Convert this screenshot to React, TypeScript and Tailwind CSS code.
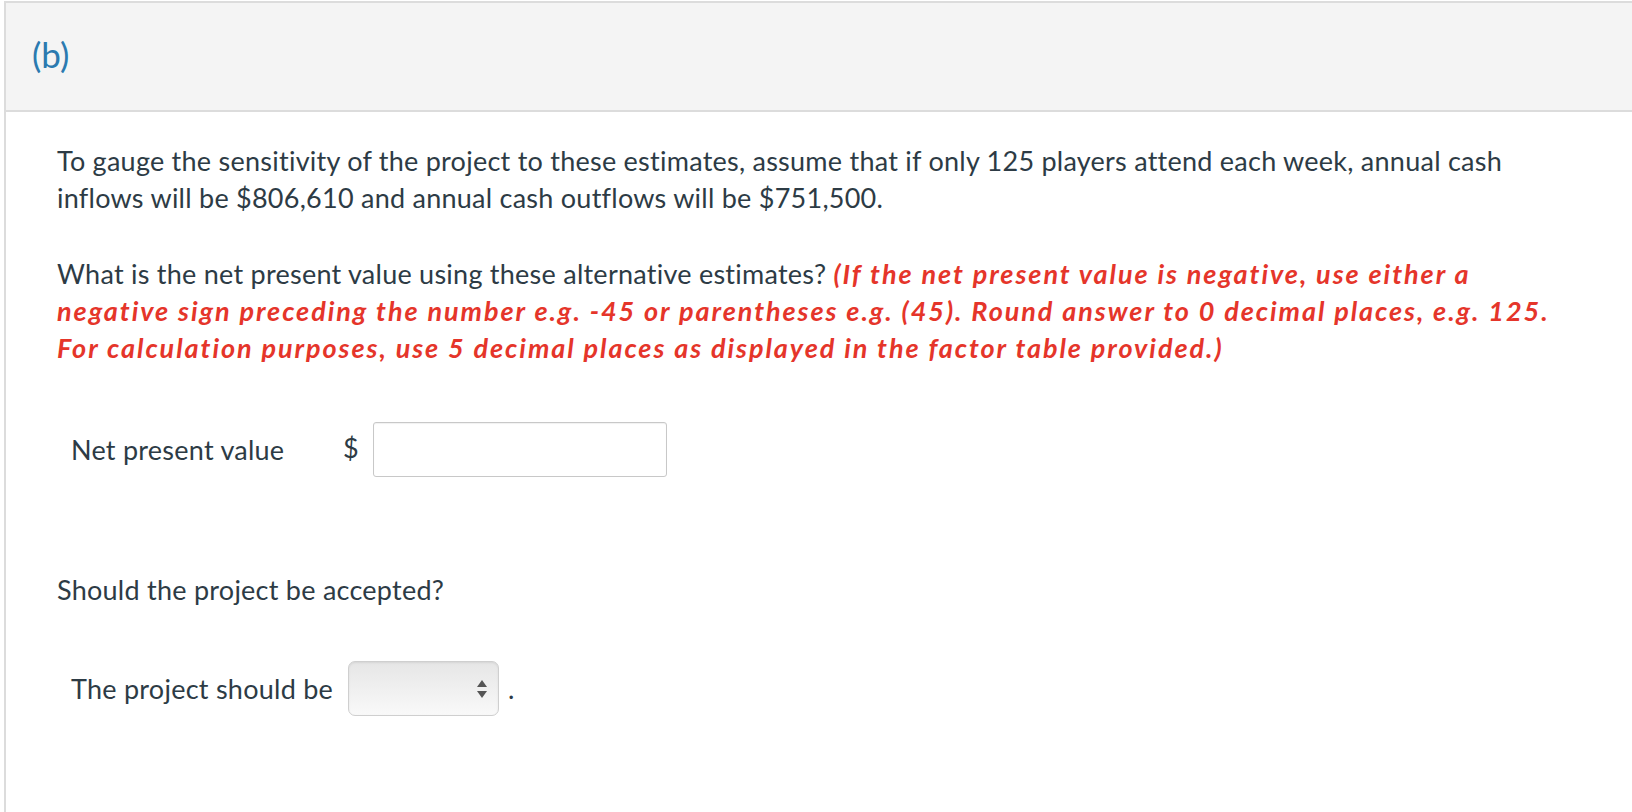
import React from "react";

export default function App() {
  return (
    <div
      className="min-h-[812px] w-[1632px] bg-white pl-[4px] pt-[1px] text-[#2d3b45] [font-variant-ligatures:none]"
      style={{ fontFamily: "Lato, 'Noto Sans', sans-serif" }}
    >
      <div className="min-h-[811px] border-l-2 border-t-2 border-[#dcdcdc]">
        <div className="flex h-[109px] items-center border-b-2 border-[#dcdcdc] bg-[#f4f4f4] pl-[26px] pb-[4px]">
          <span className="text-[35px] leading-none text-[#2b7ab0]">(b)</span>
        </div>
        <div className="flex flex-col pl-[51px] pt-[30px] text-[27px] leading-[37px] tracking-[0.25px]">
          <p>
            To gauge the sensitivity of the project to these estimates, assume that if only 125 players attend each week, annual cash
            <br />
            inflows will be $806,610 and annual cash outflows will be $751,500.
          </p>
          <p className="mt-[39px]">
            What is the net present value using these alternative estimates?{" "}
            <span className="font-bold italic tracking-[1.95px] text-[#e5352a]">
              (If the net present value is negative, use either a
              <br />
              negative sign preceding the number e.g. -45 or parentheses e.g. (45). Round answer to 0 decimal places, e.g. 125.
              <br />
              For calculation purposes, use 5 decimal places as displayed in the factor table provided.)
            </span>
          </p>
          <div className="mt-[56px] flex h-[55px] items-center pl-[14px]">
            <span className="w-[272px]">Net present value</span>
            <span className="-mt-[4px]">$</span>
            <div className="ml-[14px] h-[55px] w-[294px] rounded-[3px] border border-[#c8c8c8] bg-white shadow-[inset_0_1px_1px_rgba(0,0,0,0.06)]" />
          </div>
          <p className="mt-[94px]">Should the project be accepted?</p>
          <div className="mt-[53px] flex h-[55px] items-center pl-[14px]">
            <span>The project should be</span>
            <div className="ml-[15px] flex h-[55px] w-[151px] items-center justify-end rounded-[7px] border border-[#cfcfcf] bg-gradient-to-b from-[#e6e6e6] to-[#f9f9f9] pr-[11px] shadow-[inset_0_1px_2px_rgba(0,0,0,0.08)]">
              <svg width="10" height="20" viewBox="0 0 10 20">
                <path d="M5 1 L10 8 L0 8 Z" fill="#555" />
                <path d="M0 12 L10 12 L5 19 Z" fill="#555" />
              </svg>
            </div>
            <span className="ml-[9px]">.</span>
          </div>
        </div>
      </div>
    </div>
  );
}
